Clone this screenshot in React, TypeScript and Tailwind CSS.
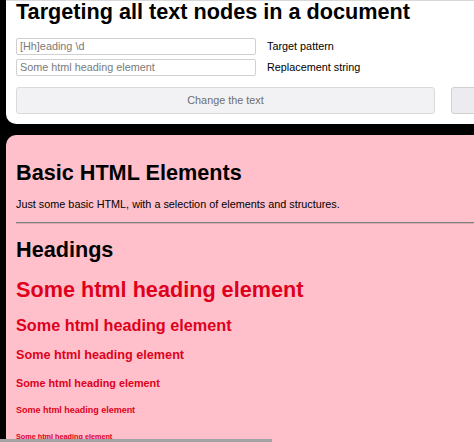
import React from "react";

export default function App() {
  const red = "text-[#de001c]";
  return (
    <div className="relative w-[474px] h-[442px] overflow-hidden bg-black font-['Liberation_Sans',Arial,sans-serif] text-black">
      <div className="ml-[6px] h-[124px] bg-white rounded-bl-[10px] pl-[10px] border-t border-[#d8d8d8] overflow-hidden">
        <h1 className="text-[21.65px] font-bold leading-none whitespace-nowrap">
          Targeting all text nodes in a document
        </h1>
        <div className="mt-[15px] flex items-center">
          <input
            readOnly
            placeholder="[Hh]eading \d"
            className="w-[240px] h-[17px] border border-[#d0d0d0] rounded-[2px] px-[3px] text-[10.83px] outline-none placeholder:text-[#7a7a7a] bg-white"
          />
          <span className="ml-[11px] text-[10.83px] leading-none">Target pattern</span>
        </div>
        <div className="mt-[4px] flex items-center">
          <input
            readOnly
            placeholder="Some html heading element"
            className="w-[240px] h-[17px] border border-[#d0d0d0] rounded-[2px] px-[3px] text-[10.83px] outline-none placeholder:text-[#7a7a7a] bg-white"
          />
          <span className="ml-[11px] text-[10.83px] leading-none">Replacement string</span>
        </div>
        <div className="mt-[11px] flex">
          <button className="w-[419px] h-[27px] shrink-0 bg-[#f2f2f4] border border-[#dadada] rounded-[3px] text-[10.83px] text-[#6e6e6e]">
            Change the text
          </button>
          <button className="ml-[16px] w-[100px] h-[27px] shrink-0 bg-[#ececf0] border border-[#cfcfd4] rounded-[3px]" />
        </div>
      </div>
      <div className="mt-[11px] ml-[6px] h-[400px] bg-[#ffc0cb] rounded-tl-[10px] pl-[10px] pt-[27px]">
        <h1 className="text-[21.65px] font-bold leading-none">Basic HTML Elements</h1>
        <p className="mt-[15.3px] text-[10.83px] leading-none">
          Just some basic HTML, with a selection of elements and structures.
        </p>
        <div className="mt-[12px] h-[2px] border-t border-[#7f7f7f] border-b-[1px] border-b-[#d9a7b0]" />
        <h2 className="mt-[15px] text-[21.65px] font-bold leading-none">Headings</h2>
        <h1 className={`mt-[18.5px] text-[21.65px] font-bold leading-none ${red}`}>Some html heading element</h1>
        <h2 className={`mt-[16.8px] text-[16.24px] font-bold leading-none ${red}`}>Some html heading element</h2>
        <h3 className={`mt-[15.2px] text-[12.67px] font-bold leading-none ${red}`}>Some html heading element</h3>
        <h4 className={`mt-[16.3px] text-[10.83px] font-bold leading-none ${red}`}>Some html heading element</h4>
        <h5 className={`mt-[17px] text-[8.98px] font-bold leading-none ${red}`}>Some html heading element</h5>
        <h6 className={`mt-[18.8px] text-[7.26px] font-bold leading-none ${red}`}>Some html heading element</h6>
      </div>
      <div className="absolute left-0 bottom-0 w-[272px] h-[3px] bg-[#a3a3a3]" />
    </div>
  );
}
